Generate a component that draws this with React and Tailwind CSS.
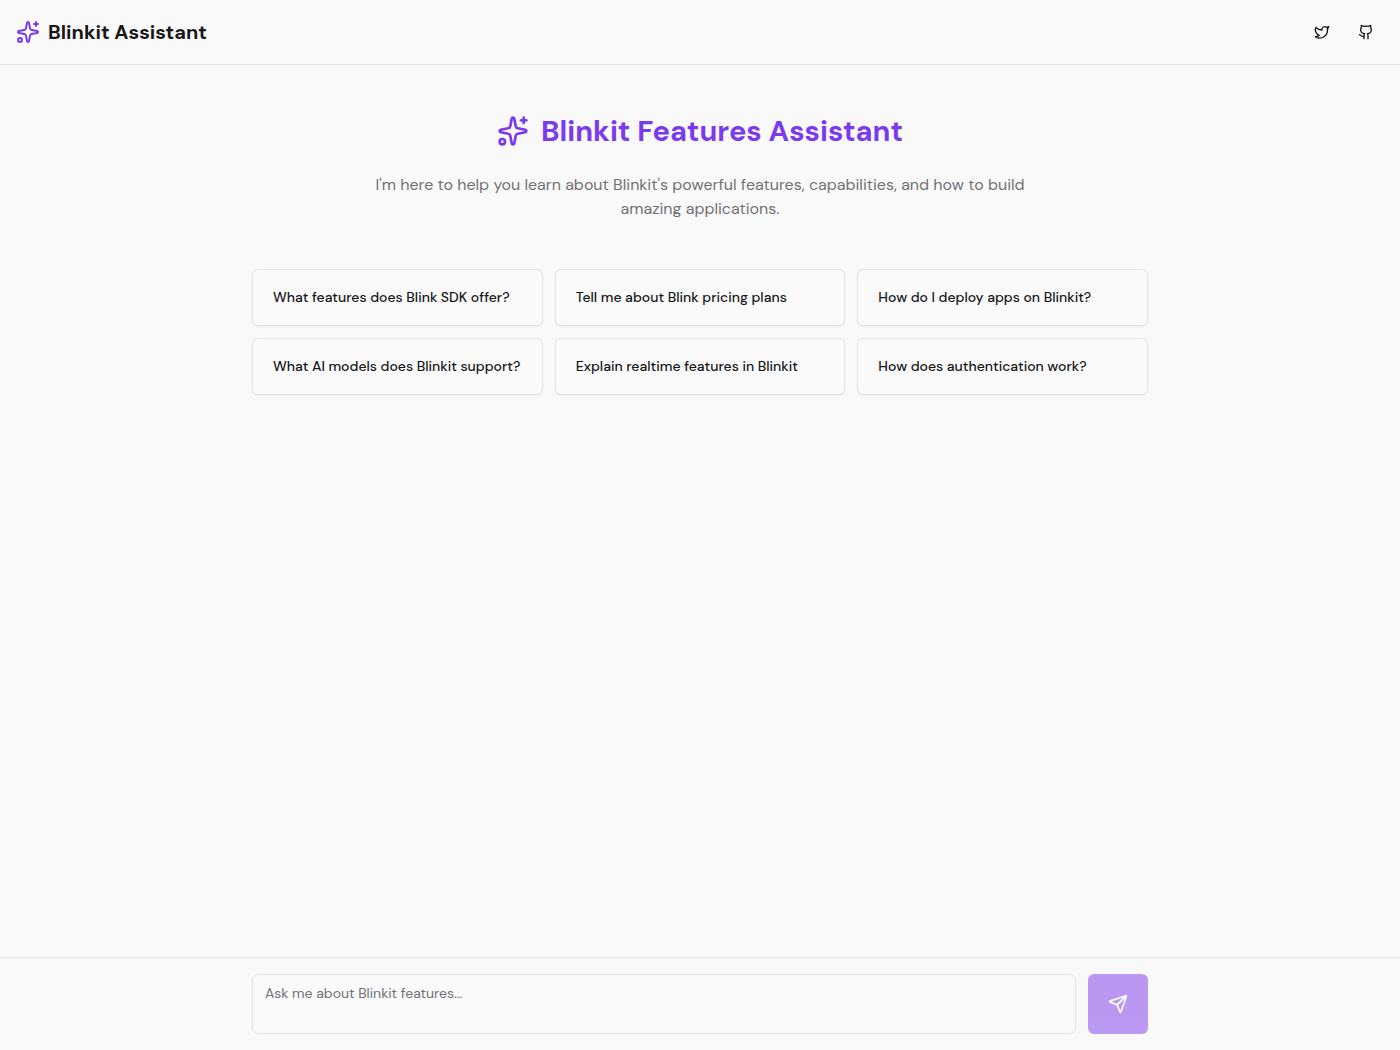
import { useState } from 'react';
import { Github, Send, Sparkles, Twitter } from 'lucide-react';

const SUGGESTIONS = [
  'What features does Blink SDK offer?',
  'Tell me about Blink pricing plans',
  'How do I deploy apps on Blinkit?',
  'What AI models does Blinkit support?',
  'Explain realtime features in Blinkit',
  'How does authentication work?'
];

export default function App() {
  const [message, setMessage] = useState('');

  const handleSubmit = (e) => {
    e.preventDefault();
    setMessage('');
  };

  return (
    <div className="flex min-h-screen flex-col bg-[#f9f9f9] font-['DM_Sans','Open_Sans',sans-serif] text-[#18181b]">
      <header className="border-b border-[#e4e4e7]">
        <div className="flex h-16 items-center justify-between px-4">
          <div className="flex items-center gap-2">
            <Sparkles className="size-6 text-[#7c3aed]" />
            <span className="text-xl font-bold">Blinkit Assistant</span>
          </div>
          <nav className="flex items-center gap-2">
            <a href="#twitter" aria-label="Twitter" className="flex size-9 items-center justify-center rounded-md hover:bg-gray-100">
              <Twitter className="size-4" />
            </a>
            <a href="#github" aria-label="GitHub" className="flex size-9 items-center justify-center rounded-md hover:bg-gray-100">
              <Github className="size-4" />
            </a>
          </nav>
        </div>
      </header>

      <main className="mx-auto w-full max-w-4xl flex-1 pt-12">
        <div className="text-center">
          <div className="flex items-center justify-center gap-3 text-[#7c3aed]">
            <Sparkles className="size-8" />
            <h1 className="text-[29px] leading-9 font-bold">Blinkit Features Assistant</h1>
          </div>
          <p className="mx-auto mt-6 max-w-2xl text-base text-[#717175]">
            I'm here to help you learn about Blinkit's powerful features, capabilities, and how to build amazing applications.
          </p>
        </div>
        <div className="mt-12 grid grid-cols-3 gap-3">
          {SUGGESTIONS.map(text => (
            <button
              key={text}
              type="button"
              onClick={() => setMessage(text)}
              className="rounded-md border border-[#e4e4e7] bg-[#fafafa] px-5 py-4 text-left text-sm leading-[23px] font-medium shadow-xs"
            >
              {text}
            </button>
          ))}
        </div>
      </main>

      <footer className="border-t border-[#e4e4e7] py-4">
        <form onSubmit={handleSubmit} className="mx-auto flex max-w-4xl gap-3">
          <textarea
            aria-label="Message"
            value={message}
            onChange={(e) => setMessage(e.target.value)}
            placeholder="Ask me about Blinkit features..."
            className="h-15 flex-1 resize-none rounded-md border border-[#e4e4e7] bg-[#fafafa] px-3 py-2 text-sm placeholder:text-[#717175]"
          />
          <button
            type="submit"
            aria-label="Send"
            disabled={!message}
            className="flex size-15 items-center justify-center rounded-md bg-[#7c3aed] text-white disabled:opacity-50"
          >
            <Send className="size-5" />
          </button>
        </form>
      </footer>
    </div>
  );
}
